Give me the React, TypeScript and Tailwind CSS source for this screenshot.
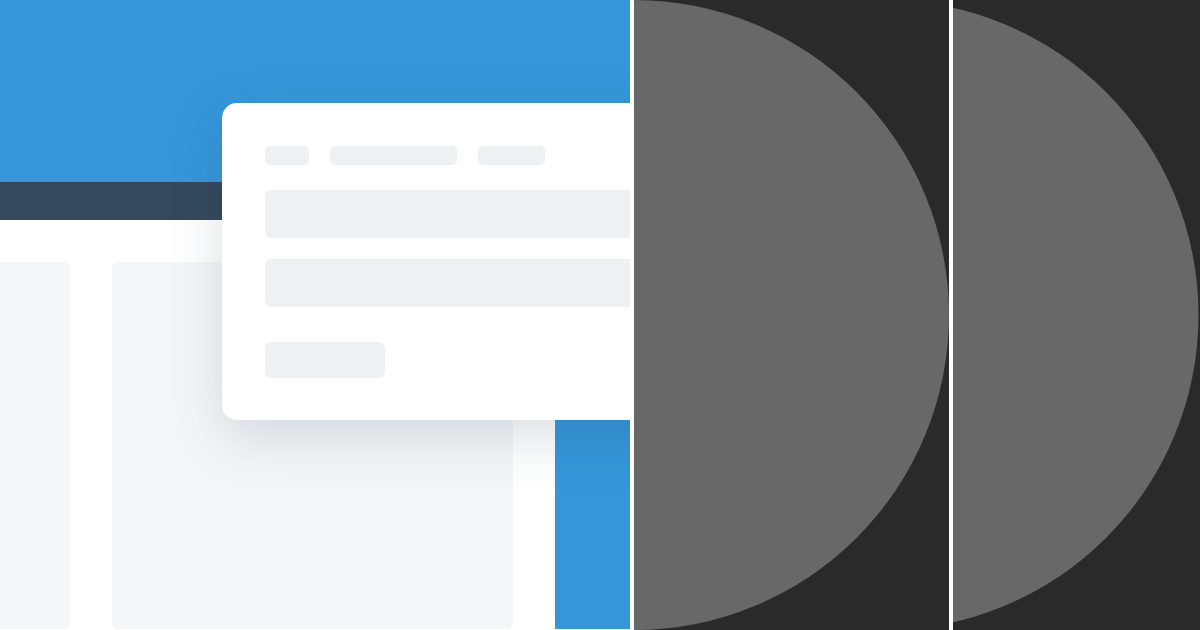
import React from 'react';

// Maquette d'écran (à gauche) + deux vignettes sombres avec un demi-cercle
const Pill = ({ w }: { w: string }) => <div className={`h-[19px] rounded-[5px] bg-[#eef0f3] ${w}`} />;

const Mockup: React.FC = () => (
    <div className="relative w-[630px] h-full shrink-0 overflow-hidden bg-white flex flex-col">
        <div className="h-[182px] shrink-0 bg-[#3597da]" />
        <div className="h-[38px] shrink-0 bg-[#34495e]" />
        <div className="flex-1 flex gap-[42px] pt-[42px] pb-[1px]">
            <div className="w-[70px] shrink-0 rounded-r-md bg-[#f5f6f8]" />
            <div className="w-[401px] shrink-0 rounded-md bg-[#f5f6f8]" />
            <div className="w-[75px] shrink-0 bg-[#3597da]" />
        </div>

        {/* Carte flottante */}
        <div className="absolute left-[222px] top-[103px] w-[470px] h-[317px] rounded-[15px] bg-white shadow-[0_18px_55px_rgba(40,55,80,0.16)] px-[43px] pt-[43px] flex flex-col">
            <div className="flex gap-[21px]">
                <Pill w="w-[44px]" />
                <Pill w="w-[127px]" />
                <Pill w="w-[67px]" />
            </div>
            <div className="mt-[25px] h-[48px] rounded-[6px] bg-[#eef0f3]" />
            <div className="mt-[21px] h-[48px] rounded-[6px] bg-[#eef0f3]" />
            <div className="mt-[35px] h-[36px] w-[120px] rounded-[6px] bg-[#eef0f3]" />
        </div>
    </div>
);

const Half: React.FC<{ width: number; cx: number }> = ({ width, cx }) => (
    <div className="h-full shrink-0 bg-[#2a2a2a]" style={{ width }}>
        <svg width={width} height={630} viewBox={`0 0 ${width} 630`} className="block">
            <circle cx={cx} cy={315} r={315} fill="#686868" />
        </svg>
    </div>
);

export default function App() {
    return (
        <div className="w-[1200px] h-[630px] flex gap-[4px] bg-white overflow-hidden">
            <Mockup />
            <Half width={315} cx={0} />
            <Half width={247} cx={-69.5} />
        </div>
    );
}
